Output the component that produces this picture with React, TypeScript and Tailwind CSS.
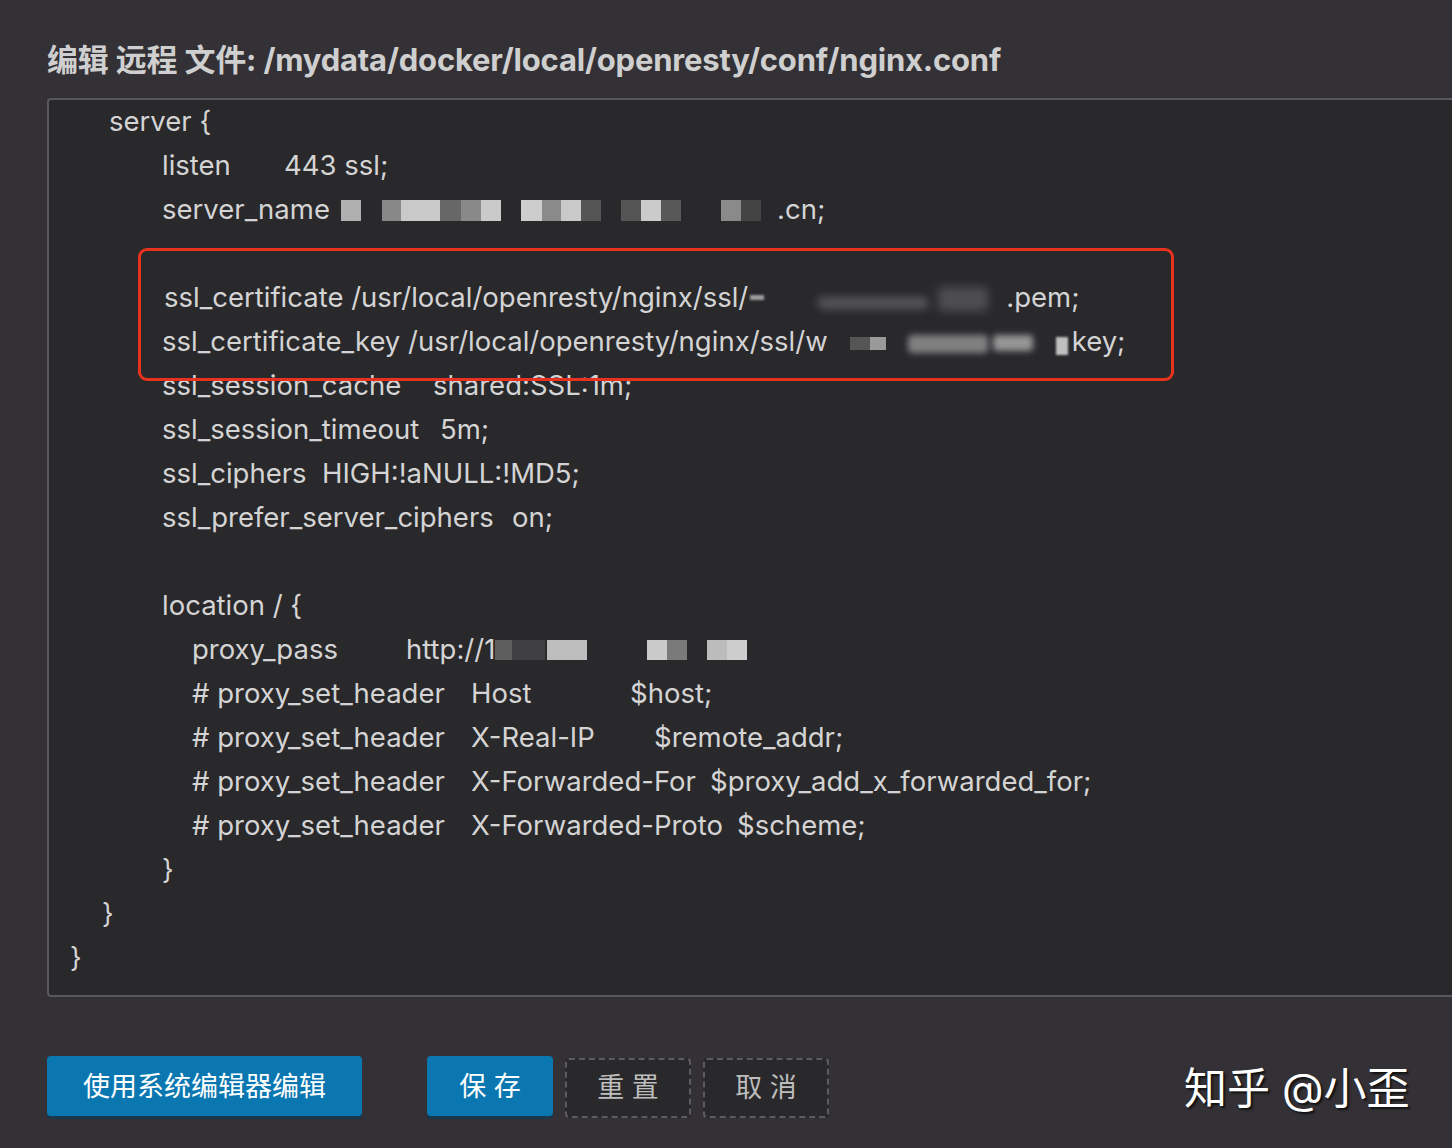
import React from "react";

type Block = [number, string];

function Mosaic({ blocks, h = 20 }: { blocks: Block[]; h?: number }) {
  return (
    <span className="inline-flex items-center">
      {blocks.map(([w, c], i) => (
        <span key={i} className="inline-block" style={{ width: w, height: h, backgroundColor: c }} />
      ))}
    </span>
  );
}

const T = "transparent";

function Line({ pl, children }: { pl: string; children?: React.ReactNode }) {
  return <div className={`flex h-[44px] items-center whitespace-pre ${pl}`}>{children}</div>;
}

export default function App() {
  return (
    <div
      className="relative h-[1148px] w-[1452px] overflow-hidden bg-[#333135] text-[#d4d4d4]"
      style={{ fontFamily: 'Inter, "Noto Sans CJK SC", sans-serif' }}
    >
      <div className="pl-[47px] pt-[38px]">
        <h1 className="text-[31px] font-bold leading-[44px] tracking-[-0.2px] text-[#cfcfcf]">
          编辑 远程 文件: /mydata/docker/local/openresty/conf/nginx.conf
        </h1>
        <div className="mt-[16px] h-[899px] w-[1440px] rounded-tl-[4px] rounded-bl-[4px] border-2 border-r-0 border-[#58575b] bg-[#29282b] text-[27.5px]">
          <Line pl="pl-[60px]">server {"{"}</Line>
          <Line pl="pl-[113px]">
            <span className="w-[122px]">listen</span>
            <span>443 ssl;</span>
          </Line>
          <Line pl="pl-[113px]">
            <span className="w-[179px]">server_name</span>
            <Mosaic h={21} blocks={[[20, "#b0b0b0"], [21, T], [19, "#888"], [39, "#c9c9c9"], [21, "#676767"], [20, "#898989"], [20, "#cacaca"], [20, T], [21, "#cdcdcd"], [19, "#8a8a8a"], [20, "#c9c9c9"], [20, "#555"], [20, T], [20, "#555"], [20, "#cbcbcb"], [20, "#585858"], [40, T], [20, "#8a8a8a"], [20, "#444"], [16, T]]} />
            <span>.cn;</span>
          </Line>
          <Line pl="pl-[113px]" />
          <Line pl="pl-[115px]">
            <span>ssl_certificate /usr/local/openresty/nginx/ssl/</span>
            <span className="relative inline-block h-[30px] w-[258px]">
              <span className="absolute left-[2px] top-[12px] h-[5px] w-[14px] bg-[#cfcfcf] opacity-70 blur-[1px]" />
              <span className="absolute left-[70px] top-[14px] h-[12px] w-[110px] rounded bg-[#bdbdbd] opacity-30 blur-[4px]" />
              <span className="absolute left-[190px] top-[4px] h-[24px] w-[50px] rounded bg-[#e0e0e0] opacity-20 blur-[5px]" />
            </span>
            <span>.pem;</span>
          </Line>
          <Line pl="pl-[113px]">
            <span>ssl_certificate_key /usr/local/openresty/nginx/ssl/w</span>
            <span className="relative inline-block h-[30px] w-[244px]">
              <span className="absolute left-[22px] top-[10px] h-[13px] w-[20px] bg-[#555]" />
              <span className="absolute left-[42px] top-[10px] h-[13px] w-[16px] bg-[#9a9a9a]" />
              <span className="absolute left-[80px] top-[8px] h-[18px] w-[80px] rounded bg-[#d8d8d8] opacity-50 blur-[3px]" />
              <span className="absolute left-[165px] top-[8px] h-[16px] w-[40px] rounded bg-[#e0e0e0] opacity-60 blur-[3px]" />
              <span className="absolute left-[228px] top-[10px] h-[18px] w-[12px] bg-[#e6e6e6] opacity-80 blur-[1px]" />
            </span>
            <span>key;</span>
          </Line>
          <Line pl="pl-[113px]">
            <span className="w-[271px]">ssl_session_cache</span>
            <span>shared:SSL:1m;</span>
          </Line>
          <Line pl="pl-[113px]">
            <span className="w-[278px]">ssl_session_timeout</span>
            <span>5m;</span>
          </Line>
          <Line pl="pl-[113px]">
            <span className="w-[160px]">ssl_ciphers</span>
            <span>HIGH:!aNULL:!MD5;</span>
          </Line>
          <Line pl="pl-[113px]">
            <span className="w-[350px]">ssl_prefer_server_ciphers</span>
            <span>on;</span>
          </Line>
          <Line pl="pl-[113px]" />
          <Line pl="pl-[113px]">location / {"{"}</Line>
          <Line pl="pl-[143px]">
            <span className="w-[214px]">proxy_pass</span>
            <span>http://1</span>
            <Mosaic h={20} blocks={[[17, "#5e5e5e"], [33, "#403f42"], [2, T], [40, "#bdbdbd"], [20, T], [40, T], [20, "#cacaca"], [20, "#7a7a7a"], [20, T], [20, "#bcbcbc"], [20, "#cdcdcd"]]} />
          </Line>
          <Line pl="pl-[143px]">
            <span className="w-[279px]"># proxy_set_header</span>
            <span className="w-[159px]">Host</span>
            <span>$host;</span>
          </Line>
          <Line pl="pl-[143px]">
            <span className="w-[279px]"># proxy_set_header</span>
            <span className="w-[183px]">X-Real-IP</span>
            <span>$remote_addr;</span>
          </Line>
          <Line pl="pl-[143px]">
            <span className="w-[279px]"># proxy_set_header</span>
            <span className="w-[239px]">X-Forwarded-For</span>
            <span>$proxy_add_x_forwarded_for;</span>
          </Line>
          <Line pl="pl-[143px]">
            <span className="w-[279px]"># proxy_set_header</span>
            <span className="w-[266px]">X-Forwarded-Proto</span>
            <span>$scheme;</span>
          </Line>
          <Line pl="pl-[113px]">{"}"}</Line>
          <Line pl="pl-[53px]">{"}"}</Line>
          <Line pl="pl-[21px]">{"}"}</Line>
        </div>

        <div className="mt-[59px] flex items-start text-[27px]">
          <button className="h-[60px] w-[315px] rounded-[4px] bg-[#0b77b1] pt-[3px] text-white shadow-[0_3px_0_#17384d]">
            使用系统编辑器编辑
          </button>
          <button className="ml-[65px] h-[60px] w-[126px] rounded-[4px] bg-[#0b77b1] pt-[3px] text-white shadow-[0_3px_0_#17384d]">
            保 存
          </button>
          <button className="ml-[12px] mt-[2px] h-[60px] w-[126px] rounded-[4px] border-2 border-dashed border-[#5c5b5f] bg-[#29282b] text-[#bdbdbd]">
            重 置
          </button>
          <button className="ml-[12px] mt-[2px] h-[60px] w-[126px] rounded-[4px] border-2 border-dashed border-[#5c5b5f] bg-[#29282b] text-[#bdbdbd]">
            取 消
          </button>
        </div>
      </div>

      <div className="pointer-events-none absolute left-[138px] top-[248px] h-[133px] w-[1036px] rounded-[9px] border-[3px] border-[#e8321f]" />

      <div
        className="pointer-events-none absolute left-[1184px] top-[1061px] text-[43px] leading-[54px] text-white"
        style={{ textShadow: "2px 2px 2px #111" }}
      >
        知乎 @小歪
      </div>
    </div>
  );
}
